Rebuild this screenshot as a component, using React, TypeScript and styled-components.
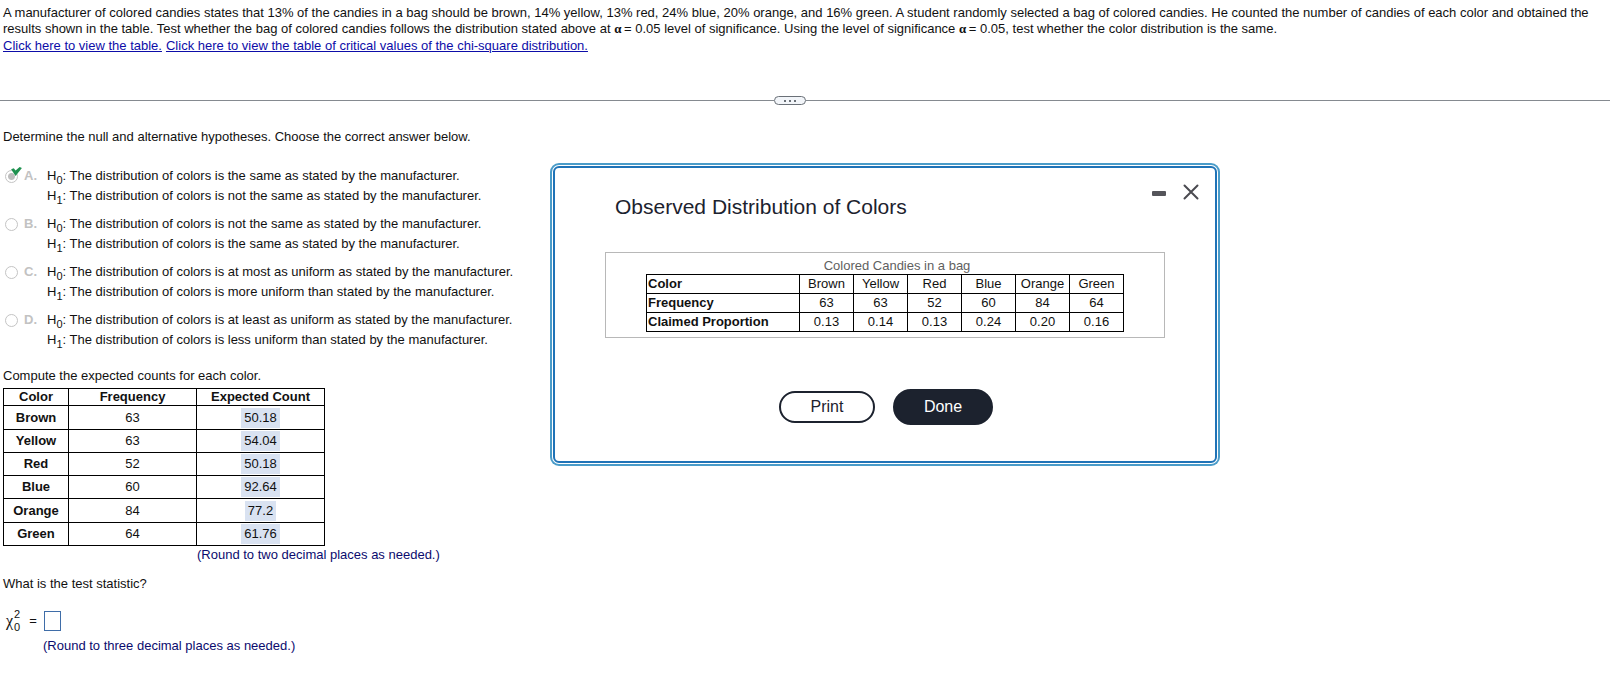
import React from "react";
import styled, { createGlobalStyle, css } from "styled-components";

const GlobalStyle = createGlobalStyle`
  * { box-sizing: border-box; }
  body {
    margin: 0;
    background: #fff;
    color: #111;
    font: 13px/16px "Liberation Sans", Arial, sans-serif;
  }
`;

const Page = styled.div`
  position: relative;
  min-height: 100vh;
  padding: 5px 8px 0 0;
`;

const Problem = styled.header`
  min-height: 95px;
  padding-left: 3px;
`;

const Paragraph = styled.p`
  margin: 0 0 1px;
`;

const Links = styled.nav`
  display: flex;
  gap: 4px;
`;

const TextLink = styled.a`
  color: #0d0da8;
`;

const Alpha = styled.span`
  display: inline-block;
  font: bold 13px/14px "Liberation Serif", "Times New Roman", serif;
`;

const Divider = styled.div`
  display: flex;
  align-items: center;
  height: 1px;

  &::before,
  &::after {
    content: "";
    flex: 1 1 0;
    height: 1px;
    background: #858a90;
  }

  &::after {
    flex-basis: 30px;
  }
`;

const Handle = styled.button`
  display: flex;
  align-items: center;
  justify-content: center;
  gap: 3px;
  width: 32px;
  height: 9px;
  padding: 0;
  border: 1px solid #6a7077;
  border-radius: 5px;
  background: #f2f5f9;
`;

const HandleDot = styled.span`
  width: 2px;
  height: 2px;
  background: #6a7077;
`;

const Work = styled.main`
  padding: 28px 3px 0;
`;

const Choices = styled.fieldset`
  display: flex;
  flex-direction: column;
  gap: 8px;
  margin: 0 0 18px;
  padding: 0;
  border: 0;
`;

const Legend = styled.legend`
  padding: 0;
  margin-bottom: 21px;
`;

const Choice = styled.label`
  display: grid;
  grid-template-columns: 21px 23px auto;
  justify-content: start;
  line-height: 20px;
`;

const RadioCell = styled.span`
  position: relative;
  display: flex;
  height: 20px;
  align-items: center;
`;

const Radio = styled.input`
  appearance: none;
  width: 13px;
  height: 13px;
  margin: 0 0 0 2px;
  border: 1px solid #c4c4c4;
  border-radius: 50%;
  background: #fff;

  &:checked {
    background: radial-gradient(circle, #bdbdbd 3px, #fff 4px);
  }
`;

const Tick = styled.svg`
  position: absolute;
  left: 8px;
  top: 1px;
`;

const Letter = styled.span`
  color: #c2c2c2;
  font-weight: bold;
`;

const Hypothesis = styled.span`
  display: block;
`;

const Sub = styled.sub`
  font-size: 11px;
  line-height: 1px;
`;

const cellLine = css`
  border: 1px solid #000;
`;

const CountTable = styled.table`
  border-collapse: collapse;
  table-layout: fixed;
  width: 322px;
  margin-bottom: 1px;
  text-align: center;

  caption {
    text-align: left;
    margin-bottom: 4px;
  }

  th,
  td {
    ${cellLine}
    padding: 0;
  }

  tbody tr {
    height: 23px;
  }

  tbody tr:nth-child(4n + 1) {
    height: 24px;
  }
`;

const ColorColumn = styled.col`
  width: 65px;
`;

const Answer = styled.span`
  display: inline-block;
  padding: 2px 3px;
  background: #d9e2f1;
`;

const Note = styled.p<{ $indent: number }>`
  margin: 0 0 0 ${(p) => p.$indent}px;
  color: #0b0b6e;
`;

const Question = styled.p`
  margin: 13px 0 19px;
`;

const Statistic = styled.label`
  display: flex;
  align-items: center;
  height: 20px;
  margin-bottom: 7px;
  padding-left: 3px;
`;

const Chi = styled.span`
  font: 16px/20px "Liberation Serif", "Times New Roman", serif;
`;

const Scripts = styled.span`
  display: flex;
  flex-direction: column;
  margin: 0 9px 0 1px;
  font-size: 11px;
  line-height: 13px;
`;

const StatisticInput = styled.input`
  width: 17px;
  height: 20px;
  margin-left: 7px;
  padding: 0;
  border: 1px solid #3f6da8;
  background: #fff;
`;

const Dialog = styled.section`
  position: absolute;
  left: 553px;
  top: 166px;
  width: 664px;
  padding: 15px 50px 36px;
  border: 2px solid #1f73b7;
  border-radius: 6px;
  box-shadow: 0 0 0 1px #fff, 0 0 0 3px #4a9cc9;
  background: #fff;
`;

const DialogHeader = styled.div`
  display: flex;
  align-items: flex-start;
  justify-content: space-between;
  margin: 0 -35px 33px 10px;
`;

const DialogTitle = styled.h2`
  margin: 0;
  padding-top: 12px;
  color: #1c222e;
  font-size: 21px;
  font-weight: normal;
  line-height: 24px;
`;

const WindowControls = styled.div`
  display: flex;
  gap: 14px;
`;

const IconButton = styled.button`
  display: flex;
  width: 18px;
  height: 18px;
  align-items: center;
  justify-content: center;
  padding: 0;
  border: 0;
  background: none;
`;

const DataFrame = styled.div`
  display: flex;
  justify-content: center;
  padding: 5px 0;
  border: 1px solid #b8b8b8;
`;

const DataTable = styled.table`
  border-collapse: collapse;
  text-align: center;

  caption {
    padding-left: 24px;
    color: #5f5f5f;
  }

  th,
  td {
    ${cellLine}
    width: 54px;
    height: 19px;
    padding: 0 1px;
  }

  thead th {
    font-weight: normal;
  }

  tr th:first-child {
    width: 153px;
    font-weight: bold;
    text-align: left;
  }
`;

const Actions = styled.div`
  display: flex;
  align-items: center;
  justify-content: center;
  gap: 18px;
  margin-top: 51px;
  padding-left: 2px;
`;

const ActionButton = styled.button<{ $primary?: boolean }>`
  width: ${(p) => (p.$primary ? 100 : 96)}px;
  height: ${(p) => (p.$primary ? 36 : 32)}px;
  border: 2px solid #1c222e;
  border-radius: 18px;
  background: ${(p) => (p.$primary ? "#1c222e" : "#fff")};
  color: ${(p) => (p.$primary ? "#fff" : "#1c222e")};
  font: 16px/20px "Liberation Sans", Arial, sans-serif;
`;

const choices = [
  ["A", "the same as", "not the same as"],
  ["B", "not the same as", "the same as"],
  ["C", "at most as uniform as", "more uniform than"],
  ["D", "at least as uniform as", "less uniform than"],
];

const candies = [
  { color: "Brown", count: 63, claimed: "0.13", expected: "50.18" },
  { color: "Yellow", count: 63, claimed: "0.14", expected: "54.04" },
  { color: "Red", count: 52, claimed: "0.13", expected: "50.18" },
  { color: "Blue", count: 60, claimed: "0.24", expected: "92.64" },
  { color: "Orange", count: 84, claimed: "0.20", expected: "77.2" },
  { color: "Green", count: 64, claimed: "0.16", expected: "61.76" },
];

export default function App() {
  return (
    <Page>
      <GlobalStyle />
      <Problem>
        <Paragraph>
          A manufacturer of colored candies states that 13% of the candies in a bag should be brown, 14% yellow, 13%
          red, 24% blue, 20% orange, and 16% green. A student randomly selected a bag of colored candies. He counted
          the number of candies of each color and obtained the results shown in the table. Test whether the bag of
          colored candies follows the distribution stated above at <Alpha>α</Alpha>&thinsp;= 0.05 level of
          significance. Using the level of significance <Alpha>α</Alpha>&thinsp;= 0.05, test whether the color
          distribution is the same.
        </Paragraph>
        <Links>
          <TextLink href="#table">Click here to view the table.</TextLink>
          <TextLink href="#critical-values">
            Click here to view the table of critical values of the chi-square distribution.
          </TextLink>
        </Links>
      </Problem>

      <Divider>
        <Handle aria-label="Resize panels">
          <HandleDot />
          <HandleDot />
          <HandleDot />
        </Handle>
      </Divider>

      <Work>
        <Choices>
          <Legend>Determine the null and alternative hypotheses. Choose the correct answer below.</Legend>
          {choices.map(([letter, nullText, altText]) => (
            <Choice key={letter}>
              <RadioCell>
                <Radio type="radio" name="hypotheses" defaultChecked={letter === "A"} disabled />
                {letter === "A" && (
                  <Tick width="11" height="9" viewBox="0 0 12 10" aria-hidden="true">
                    <path d="M0 2.5 3 1.5 5 4 9.5 0 12 1 5 10Z" fill="#1f9150" />
                  </Tick>
                )}
              </RadioCell>
              <Letter>{letter}.</Letter>
              <span>
                <Hypothesis>
                  H<Sub>0</Sub>: The distribution of colors is {nullText} stated by the manufacturer.
                </Hypothesis>
                <Hypothesis>
                  H<Sub>1</Sub>: The distribution of colors is {altText} stated by the manufacturer.
                </Hypothesis>
              </span>
            </Choice>
          ))}
        </Choices>

        <CountTable>
          <caption>Compute the expected counts for each color.</caption>
          <colgroup>
            <ColorColumn />
            <col />
            <col />
          </colgroup>
          <thead>
            <tr>
              <th>Color</th>
              <th>Frequency</th>
              <th>Expected Count</th>
            </tr>
          </thead>
          <tbody>
            {candies.map((c) => (
              <tr key={c.color}>
                <th>{c.color}</th>
                <td>{c.count}</td>
                <td>
                  <Answer>{c.expected}</Answer>
                </td>
              </tr>
            ))}
          </tbody>
        </CountTable>
        <Note $indent={194}>(Round to two decimal places as needed.)</Note>

        <Question>What is the test statistic?</Question>
        <Statistic>
          <Chi>χ</Chi>
          <Scripts>
            <span>2</span>
            <span>0</span>
          </Scripts>
          <span>=</span>
          <StatisticInput type="text" aria-label="Test statistic" />
        </Statistic>
        <Note $indent={40}>(Round to three decimal places as needed.)</Note>
      </Work>

      <Dialog role="dialog" aria-labelledby="dialog-title">
        <DialogHeader>
          <DialogTitle id="dialog-title">Observed Distribution of Colors</DialogTitle>
          <WindowControls>
            <IconButton aria-label="Minimize">
              <svg width="14" height="8" viewBox="0 0 14 8">
                <rect y="3" width="14" height="5" rx="1" fill="#55555a" />
              </svg>
            </IconButton>
            <IconButton aria-label="Close">
              <svg width="16" height="16" viewBox="0 0 16 16">
                <path d="M1.5 1.5l13 13m0-13l-13 13" stroke="#4a4a50" strokeWidth="2" strokeLinecap="round" />
              </svg>
            </IconButton>
          </WindowControls>
        </DialogHeader>
        <DataFrame>
          <DataTable>
            <caption>Colored Candies in a bag</caption>
            <thead>
              <tr>
                <th>Color</th>
                {candies.map((c) => (
                  <th key={c.color}>{c.color}</th>
                ))}
              </tr>
            </thead>
            <tbody>
              <tr>
                <th>Frequency</th>
                {candies.map((c) => (
                  <td key={c.color}>{c.count}</td>
                ))}
              </tr>
              <tr>
                <th>Claimed Proportion</th>
                {candies.map((c) => (
                  <td key={c.color}>{c.claimed}</td>
                ))}
              </tr>
            </tbody>
          </DataTable>
        </DataFrame>
        <Actions>
          <ActionButton>Print</ActionButton>
          <ActionButton $primary>Done</ActionButton>
        </Actions>
      </Dialog>
    </Page>
  );
}
